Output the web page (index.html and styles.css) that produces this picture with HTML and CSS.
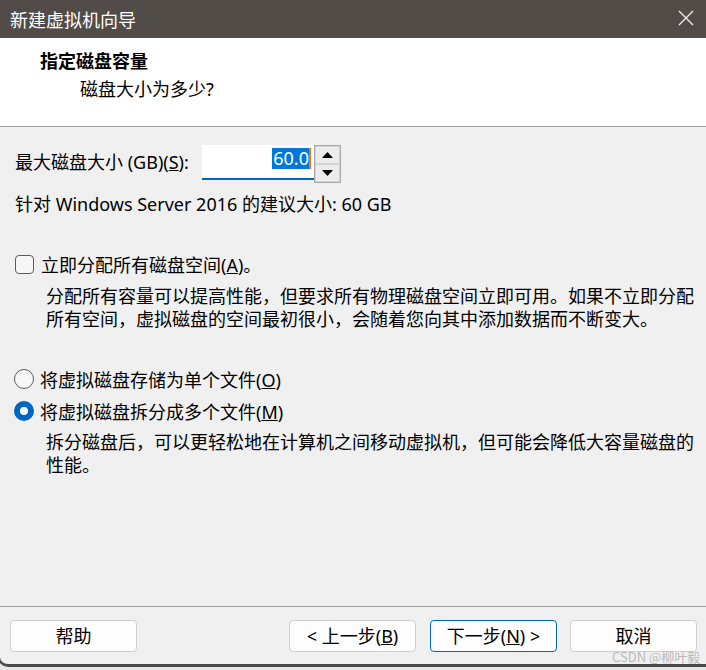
FILE: index.html
```html
<!DOCTYPE html>
<html lang="zh-CN">
<head>
<meta charset="utf-8">
<title>新建虚拟机向导</title>
<link rel="stylesheet" href="styles.css">
</head>
<body>
<div class="window">
  <div class="titlebar">
    <span class="title">新建虚拟机向导</span>
    <svg class="close" width="16" height="16" viewBox="0 0 16 16"><path d="M1 1 L15 15 M15 1 L1 15" stroke="#ececec" stroke-width="1.4" fill="none"/></svg>
  </div>
  <div class="header">
    <div class="h-title">指定磁盘容量</div>
    <div class="h-sub">磁盘大小为多少?</div>
  </div>
  <div class="body">
    <div class="size-row">
      <span class="size-label">最大磁盘大小 (GB)(<u>S</u>):</span>
      <div class="input">
        <span class="sel">60.0</span><span class="caret"></span>
      </div>
      <div class="spin">
        <div class="spin-btn"><svg width="11" height="6" viewBox="0 0 11 6"><path d="M0 6 L5.5 0 L11 6 Z" fill="#000"/></svg></div>
        <div class="spin-btn"><svg width="11" height="6" viewBox="0 0 11 6"><path d="M0 0 L5.5 6 L11 0 Z" fill="#000"/></svg></div>
      </div>
    </div>
    <div class="rec">针对 Windows Server 2016 的建议大小: 60 GB</div>

    <div class="check-row">
      <span class="checkbox"></span>
      <span class="opt-label">立即分配所有磁盘空间(<u>A</u>)。</span>
    </div>
    <p class="desc desc-1">分配所有容量可以提高性能，但要求所有物理磁盘空间立即可用。如果不立即分配所有空间，虚拟磁盘的空间最初很小，会随着您向其中添加数据而不断变大。</p>

    <div class="radio-row radio-first">
      <span class="radio"></span>
      <span class="opt-label">将虚拟磁盘存储为单个文件(<u>O</u>)</span>
    </div>
    <div class="radio-row radio-second">
      <span class="radio checked"></span>
      <span class="opt-label">将虚拟磁盘拆分成多个文件(<u>M</u>)</span>
    </div>
    <p class="desc desc-2">拆分磁盘后，可以更轻松地在计算机之间移动虚拟机，但可能会降低大容量磁盘的性能。</p>
  </div>
  <div class="footer">
    <button class="btn btn-help">帮助</button>
    <div class="spacer"></div>
    <button class="btn">&lt; 上一步(<u>B</u>)</button>
    <button class="btn btn-default">下一步(<u>N</u>) &gt;</button>
    <button class="btn">取消</button>
    <span class="watermark">CSDN @柳叶毅</span>
  </div>
</div>
</body>
</html>
```
FILE: styles.css
```css
* { box-sizing: border-box; }
html, body {
  margin: 0;
  padding: 0;
}
body {
  width: 706px;
  height: 670px;
  overflow: hidden;
  background: #e6e6e6;
  font-family: "Noto Sans", "Noto Sans CJK SC", sans-serif;
  font-size: 18px;
  color: #000;
}
.window {
  position: relative;
  margin-left: -2px;
  width: 720px;
  height: 667px;
  display: flex;
  flex-direction: column;
  background: #f0f0f0;
  border-left: 2px solid #4a4a4a;
  border-bottom: 3px solid #4a4a4a;
  border-bottom-left-radius: 10px;
  overflow: hidden;
}
.titlebar {
  height: 38px;
  flex: none;
  background: #514c48;
  display: flex;
  align-items: center;
  padding-left: 10px;
  width: 708px;
}
.title {
  color: #fff;
  font-family: "Noto Sans CJK SC", sans-serif;
  font-size: 18px;
  line-height: 24px;
}
.close {
  margin-left: auto;
  margin-right: 14px;
  margin-top: -3px;
}
.header {
  height: 89px;
  flex: none;
  background: #fff;
  border-bottom: 1px solid #a0a0a0;
  padding-top: 10px;
}
.h-title {
  margin-left: 40px;
  font-family: "Noto Sans CJK SC", sans-serif;
  font-weight: 700;
  font-size: 18px;
  line-height: 24px;
}
.h-sub {
  margin-left: 80px;
  margin-top: 5px;
  line-height: 24px;
}
.body {
  flex: 1;
  padding-left: 15px;
  padding-top: 18px;
  border-bottom: 1px solid #a0a0a0;
}
.size-row {
  display: flex;
  align-items: flex-start;
  height: 37px;
}
.size-label {
  width: 187px;
  line-height: 24px;
  margin-top: 5px;
}
.input {
  width: 112px;
  height: 35px;
  background: #fff;
  border-bottom: 2px solid #0067c0;
  display: flex;
  justify-content: flex-end;
  align-items: flex-start;
  padding-top: 3px;
  padding-right: 3px;
}
.sel {
  background: #0078d7;
  color: #fff;
  height: 21px;
  line-height: 21px;
  padding-left: 1px;
}
.caret {
  width: 2px;
  height: 21px;
  background: #e8741c;
}
.spin {
  width: 27px;
  height: 38px;
  border: 1px solid #a8a8a8;
  display: flex;
  flex-direction: column;
  background: #f0f0f0;
}
.spin-btn {
  flex: 1;
  border: 1px solid #d4d4d4;
  background: #ececec;
  display: flex;
  align-items: center;
  justify-content: center;
}
.rec {
  margin-top: 10px;
  line-height: 24px;
}
.check-row, .radio-row {
  display: flex;
  align-items: center;
  height: 24px;
}
.check-row {
  margin-top: 36px;
}
.checkbox {
  width: 19px;
  height: 19px;
  border: 1.5px solid #5c5c5c;
  border-radius: 4px;
  background: #f6f6f6;
  margin-right: 7px;
}
.radio {
  width: 20px;
  height: 20px;
  border-radius: 50%;
  border: 1.5px solid #5c5c5c;
  background: #f6f6f6;
  margin-left: -1px;
  margin-right: 6px;
}
.radio.checked {
  border: 6px solid #0067c0;
  background: #fff;
}
.desc {
  margin: 9px 0 0 31px;
  line-height: 23px;
  width: 650px;
}
.radio-first { margin-top: 36px; }
.radio-second { margin-top: 8px; }
.desc-2 { margin-top: 8px; }
.footer {
  position: relative;
  height: 57px;
  flex: none;
  display: flex;
  align-items: flex-start;
  padding: 13px 0 0 10px;
  width: 708px;
}
.btn {
  width: 127px;
  height: 32px;
  background: #fdfdfd;
  border: 1px solid #d0d0d0;
  border-radius: 4px;
  font-family: "Noto Sans", "Noto Sans CJK SC", sans-serif;
  font-size: 18px;
  line-height: 24px;
  color: #000;
  padding: 0;
  margin-left: 14px;
}
.btn-help { margin-left: 0; }
.btn-default {
  border-color: #0067c0;
}
.spacer { width: 138px; }
.footer .btn:last-of-type { margin-left: 13px; }
.watermark {
  position: absolute;
  left: 612px;
  top: 43px;
  font-family: "Noto Sans CJK SC", sans-serif;
  font-size: 13px;
  line-height: 14px;
  color: rgba(160, 160, 160, 0.7);
  white-space: nowrap;
}
```
